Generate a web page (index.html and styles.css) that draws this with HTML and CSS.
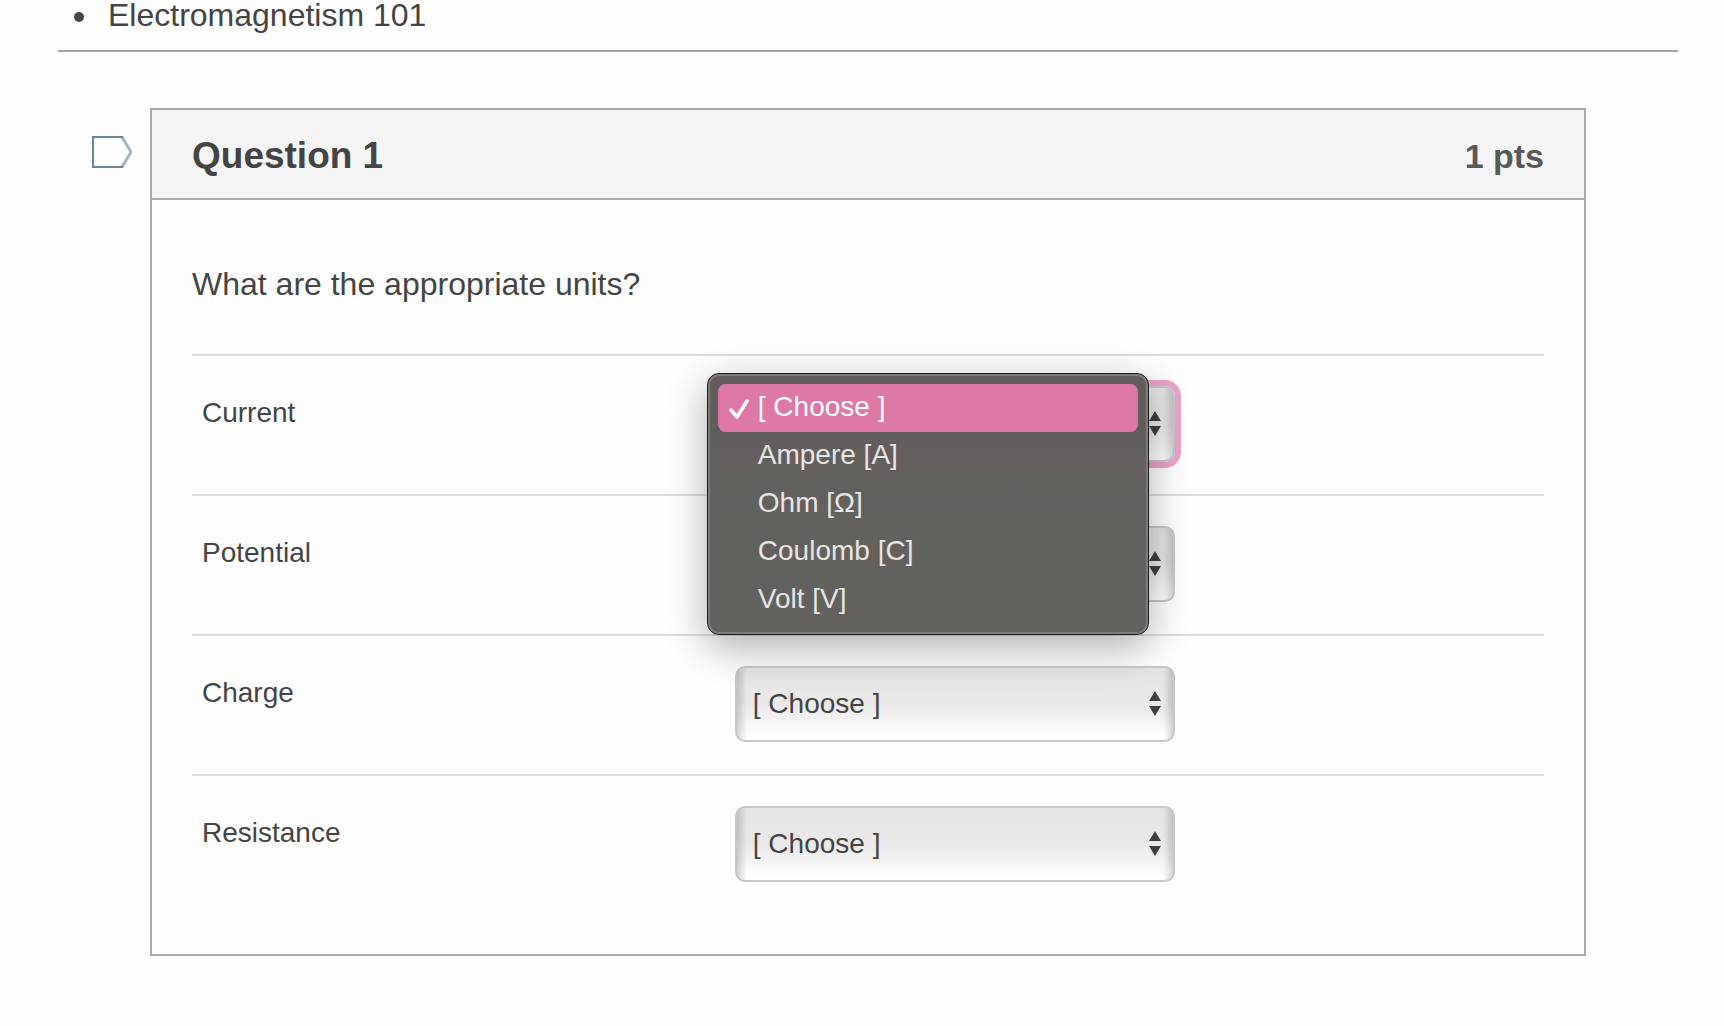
FILE: index.html
```html
<!DOCTYPE html>
<html lang="en">
<head>
  <meta charset="UTF-8">
  <meta name="viewport" content="width=device-width, initial-scale=1">
  <title>Electromagnetism 101</title>
  <link rel="stylesheet" href="styles.css">
</head>
<body>

<main class="page">
  <ul class="topics">
    <li>Electromagnetism 101</li>
  </ul>

  <form class="quiz">
    <button type="button" class="flag" aria-label="Flag question">
      <svg width="40" height="32" viewBox="0 0 40 32" fill="none">
        <path d="M30 1 L39 16 L30 31" stroke="#9fb5c6" stroke-width="3"/>
        <path d="M31 1 H1 V31 H31" stroke="#67899f" stroke-width="2"/>
      </svg>
    </button>

    <section class="question">
      <header class="question-header">
        <h2>Question 1</h2>
        <span class="points">1 pts</span>
      </header>

      <div class="question-body">
        <p class="question-text">What are the appropriate units?</p>

        <div class="answer">
          <label for="current">Current</label>
          <div class="picker open">
            <select id="current">
              <option>[ Choose ]</option>
              <option>Ampere [A]</option>
              <option>Ohm [Ω]</option>
              <option>Coulomb [C]</option>
              <option>Volt [V]</option>
            </select>
            <svg class="arrows" width="14" height="26" viewBox="0 0 14 26" fill="#404040"><path d="M7 0 L13 10 H1 Z M1 15 H13 L7 25 Z"/></svg>
            <ul class="menu" role="listbox" aria-label="Current">
              <li class="selected" role="option" aria-selected="true">
                <svg class="check" width="20" height="20" viewBox="0 0 20 20" fill="none"><path d="M2 11 L8 18 L18 2" stroke="#fff" stroke-width="3.5" stroke-linecap="round" stroke-linejoin="round"/></svg>
                [ Choose ]
              </li>
              <li role="option">Ampere [A]</li>
              <li role="option">Ohm [Ω]</li>
              <li role="option">Coulomb [C]</li>
              <li role="option">Volt [V]</li>
            </ul>
          </div>
        </div>

        <div class="answer">
          <label for="potential">Potential</label>
          <div class="picker">
            <select id="potential">
              <option>[ Choose ]</option>
              <option>Ampere [A]</option>
              <option>Ohm [Ω]</option>
              <option>Coulomb [C]</option>
              <option>Volt [V]</option>
            </select>
            <svg class="arrows" width="14" height="26" viewBox="0 0 14 26" fill="#404040"><path d="M7 0 L13 10 H1 Z M1 15 H13 L7 25 Z"/></svg>
          </div>
        </div>

        <div class="answer">
          <label for="charge">Charge</label>
          <div class="picker">
            <select id="charge">
              <option>[ Choose ]</option>
              <option>Ampere [A]</option>
              <option>Ohm [Ω]</option>
              <option>Coulomb [C]</option>
              <option>Volt [V]</option>
            </select>
            <svg class="arrows" width="14" height="26" viewBox="0 0 14 26" fill="#404040"><path d="M7 0 L13 10 H1 Z M1 15 H13 L7 25 Z"/></svg>
          </div>
        </div>

        <div class="answer">
          <label for="resistance">Resistance</label>
          <div class="picker">
            <select id="resistance">
              <option>[ Choose ]</option>
              <option>Ampere [A]</option>
              <option>Ohm [Ω]</option>
              <option>Coulomb [C]</option>
              <option>Volt [V]</option>
            </select>
            <svg class="arrows" width="14" height="26" viewBox="0 0 14 26" fill="#404040"><path d="M7 0 L13 10 H1 Z M1 15 H13 L7 25 Z"/></svg>
          </div>
        </div>
      </div>
    </section>
  </form>
</main>

</body>
</html>
```

FILE: styles.css
```css
* {
  box-sizing: border-box;
}
body {
  margin: 0;
  background: #fefefe;
  color: #444;
  font-family: 'Helvetica Neue', 'Liberation Sans', Arial, sans-serif;
  font-size: 28px;
}
.page {
  padding: 0 46px 70px 58px;
}
.topics {
  margin: 0;
  padding: 0 0 20px 42px;
  border-bottom: 2px solid #a5a5a5;
  font-size: 32px;
  line-height: 30px;
}
.topics li {
  padding-left: 8px;
}
.quiz {
  display: grid;
  grid-template-columns: 92px 1fr;
  align-items: start;
  margin: 56px 92px 0 0;
}
.flag {
  display: flex;
  margin: 28px 0 0 34px;
  padding: 0;
  width: 40px;
  border: none;
  background: none;
  cursor: pointer;
}
.question {
  border: 2px solid #aaa;
}
.question-header {
  display: flex;
  justify-content: space-between;
  align-items: baseline;
  padding: 26px 40px 22px;
  background: #f5f5f5;
  border-bottom: 2px solid #aaa;
  line-height: 40px;
}
.question-header h2 {
  margin: 0;
  font-size: 37px;
}
.points {
  color: #595959;
  font-size: 34px;
  font-weight: bold;
}
.question-body {
  padding: 62px 40px 40px;
}
.question-text {
  margin: 0 0 48px;
  font-size: 32px;
  line-height: 44px;
}
.answer {
  display: grid;
  grid-template-columns: 40% 1fr;
  align-items: start;
  padding: 30px 10px 32px;
  border-top: 2px solid #ddd;
}
.answer label {
  margin-top: 8px;
  line-height: 38px;
}
.picker {
  position: relative;
  width: 440px;
}
.picker select {
  display: block;
  appearance: none;
  width: 100%;
  height: 76px;
  padding: 0 50px 2px 16px;
  border: 2px solid #c7c7c7;
  border-radius: 10px;
  background:
    linear-gradient(to right, rgba(0,0,0,0.16), transparent 10px, transparent calc(100% - 10px), rgba(0,0,0,0.16)),
    linear-gradient(#e5e5e5, #e9e9e9 50%, #fff 95%);
  color: #444;
  font: inherit;
}
.arrows {
  position: absolute;
  top: 25px;
  right: 13px;
  pointer-events: none;
}
.open select {
  box-shadow: 0 0 0 6px #eba3c7;
}
.menu {
  position: absolute;
  z-index: 1;
  top: -13px;
  left: -28px;
  width: 442px;
  margin: 0;
  padding: 10px;
  list-style: none;
  border: 1px solid #1c1c1c;
  border-radius: 12px;
  background: linear-gradient(#635c5c, #62615e 50%);
  box-shadow: inset 0 0 0 2px #7d7c7b, 0 12px 40px rgba(0,0,0,0.32);
  color: #e6e6e5;
}
.menu li {
  position: relative;
  padding: 0 0 2px 40px;
  border-radius: 8px;
  line-height: 46px;
}
.menu .selected {
  background: #dd78a7;
  color: #fff;
}
.check {
  position: absolute;
  top: 15px;
  left: 11px;
}
```
